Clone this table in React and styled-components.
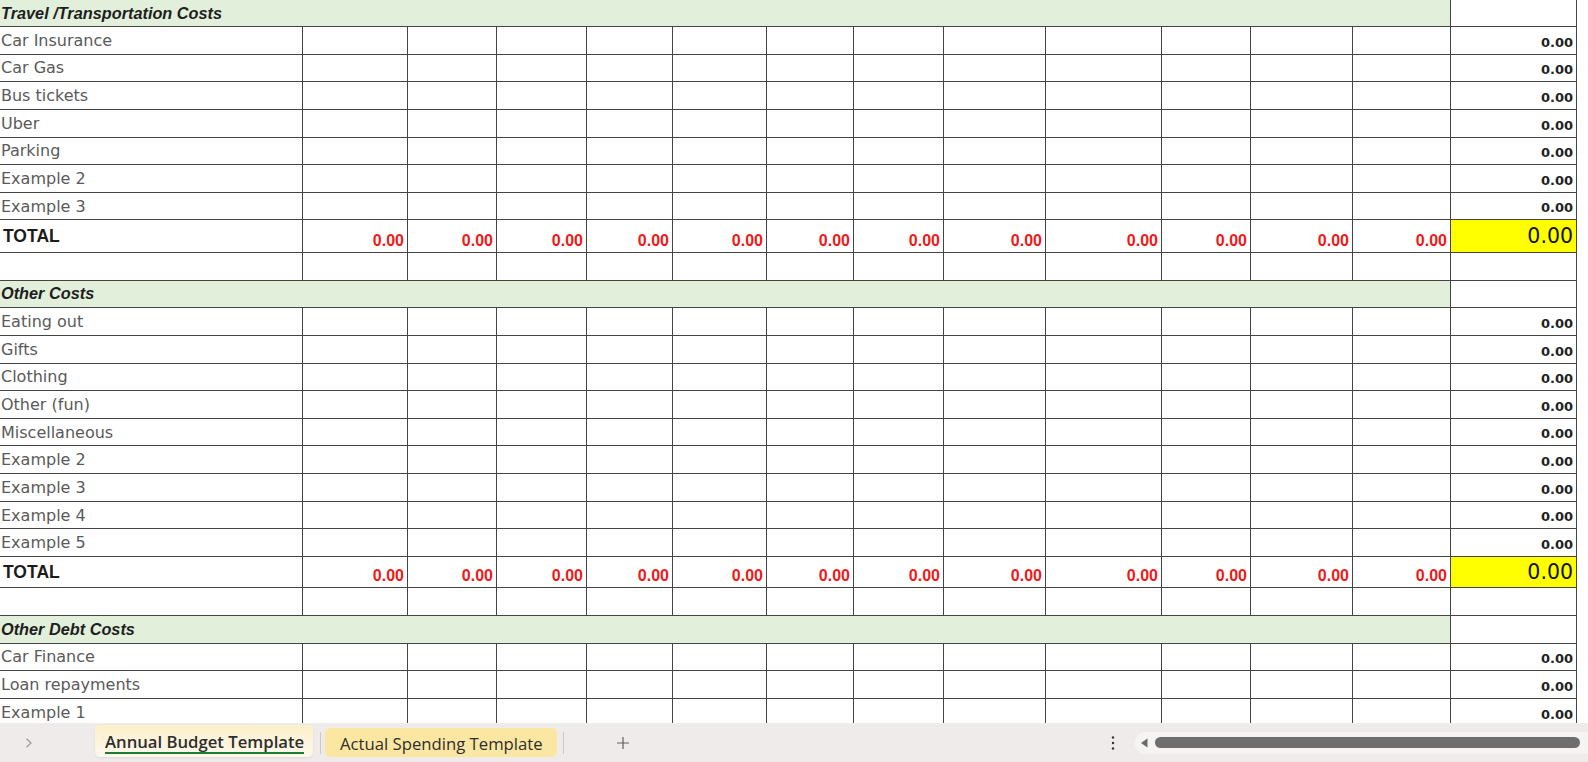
import React from 'react';
import styled, { createGlobalStyle } from 'styled-components';

const COLS = [303, 105, 89, 90, 86, 94, 87, 90, 102, 116, 89, 102, 98, 126];
const ROW_H = 27.65;
const LINE = '#444444';

const sections = [
    {
        title: 'Travel /Transportation Costs',
        headH: 27,
        items: ['Car Insurance', 'Car Gas', 'Bus tickets', 'Uber', 'Parking', 'Example 2', 'Example 3'],
        totalH: 32.5,
        withTotal: true
    },
    {
        title: 'Other Costs',
        headH: ROW_H,
        items: ['Eating out', 'Gifts', 'Clothing', 'Other (fun)', 'Miscellaneous', 'Example 2', 'Example 3', 'Example 4', 'Example 5'],
        totalH: 31.3,
        withTotal: true
    },
    {
        title: 'Other Debt Costs',
        headH: ROW_H,
        items: ['Car Finance', 'Loan repayments', 'Example 1'],
        withTotal: false
    }
];

const GlobalStyle = createGlobalStyle`
    html, body {
        margin: 0;
        padding: 0;
        background: #ffffff;
    }
    body {
        font-family: "DejaVu Sans", sans-serif;
    }
`;

const Page = styled.div`
    display: flex;
    flex-direction: column;
    width: 1588px;
    height: 762px;
    overflow: hidden;
`;

const Sheet = styled.div`
    flex: 1;
    overflow: hidden;
    min-height: 0;
`;

const Row = styled.div`
    display: grid;
    grid-template-columns: ${COLS.map(c => c + 'px').join(' ')};
    height: ${p => p.$h}px;
`;

const Cell = styled.div`
    box-sizing: border-box;
    border-right: 1px solid ${LINE};
    border-bottom: 1px solid ${LINE};
    display: flex;
    min-width: 0;
    overflow: hidden;
    white-space: nowrap;
`;

const HeadCell = styled(Cell)`
    grid-column: 1 / span 13;
    background: #e2efda;
    align-items: center;
    padding-left: 1px;
    font-family: "Liberation Sans", Arial, sans-serif;
    font-weight: 700;
    font-style: italic;
    font-size: 16.3px;
    color: #1e1e1e;
`;

const LabelCell = styled(Cell)`
    align-items: center;
    padding-left: 1px;
    font-size: 16px;
    color: #5a5a5a;
`;

const TotalLabel = styled(Cell)`
    align-items: center;
    padding-left: 3px;
    font-family: "Liberation Sans", Arial, sans-serif;
    font-weight: 700;
    font-size: 17.5px;
    color: #1c1c1c;
`;

const MonthCell = styled(Cell)`
    justify-content: flex-end;
    align-items: flex-end;
    padding: 0 3px 3px 0;
    line-height: 1;
    font-family: "Liberation Sans", Arial, sans-serif;
    font-weight: 700;
    font-size: 16px;
    color: #f01818;
`;

const SumCell = styled(Cell)`
    justify-content: flex-end;
    align-items: flex-end;
    padding: 0 3px 5px 0;
    line-height: 1;
    background: ${p => (p.$big ? '#ffff00' : '#ffffff')};
    font-weight: ${p => (p.$big ? 400 : 700)};
    font-size: ${p => (p.$big ? '20.5px' : '13px')};
    color: ${p => (p.$big ? '#111' : '#222')};
`;

const TabBar = styled.div`
    height: 39px;
    flex-shrink: 0;
    display: flex;
    align-items: center;
    background: #eeebea;
    font-family: "Open Sans", "Noto Sans", sans-serif;
    font-size: 16.7px;
`;

const NavButton = styled.div`
    width: 95px;
    height: 100%;
    display: flex;
    align-items: center;
    padding-left: 25px;
    box-sizing: border-box;
    color: #9a9a9a;
`;

const Tab = styled.div`
    box-sizing: border-box;
    width: ${p => p.$w}px;
    height: ${p => (p.$active ? 32 : 29)}px;
    margin-top: ${p => (p.$active ? -3 : 0)}px;
    margin-left: ${p => p.$ml}px;
    padding-left: ${p => (p.$active ? 10 : 15)}px;
    display: flex;
    align-items: center;
    border-radius: 5px;
    background: ${p => (p.$active ? 'linear-gradient(180deg, #fcefc8 0%, #fdf5df 60%, #fdf8ec 100%)' : '#fce7a2')};
    box-shadow: ${p => (p.$active ? '0 1px 2px rgba(0,0,0,0.08)' : 'none')};
    color: #2e2e2e;
    font-weight: ${p => (p.$active ? 600 : 400)};
    white-space: nowrap;
`;

const TabLabel = styled.span`
    display: inline-block;
    line-height: 20px;
    padding-top: 4px;
    border-bottom: 2px solid ${p => (p.$active ? '#1f7a36' : 'transparent')};
`;

const Separator = styled.div`
    width: 1px;
    height: 22px;
    margin-left: ${p => p.$ml}px;
    background: #cdc8c8;
`;

const AddButton = styled.div`
    width: 40px;
    margin-left: 39px;
    display: flex;
    justify-content: center;
    align-items: center;
    color: #606060;
`;

const Spacer = styled.div`
    flex: 1;
`;

const MoreButton = styled.div`
    width: 22px;
    display: flex;
    justify-content: center;
    align-items: center;
    margin-right: 11px;
    color: #333;
`;

const ScrollTrack = styled.div`
    width: 453px;
    height: 22px;
    display: flex;
    align-items: center;
    padding-left: 5px;
    box-sizing: border-box;
    background: #f6f4f3;
    border-radius: 11px 0 0 11px;
    color: #6a6a6a;
`;

const ScrollThumb = styled.div`
    width: 425px;
    height: 11px;
    margin-left: 7px;
    border-radius: 6px;
    background: #6e6e6e;
`;

const EmptyMonths = () => COLS.slice(1, 13).map((_, i) => <Cell key={i} />);

const Section = ({section}) => (
    <>
        <Row $h={section.headH}>
            <HeadCell>{section.title}</HeadCell>
            <Cell />
        </Row>
        {section.items.map((item, i) => (
            <Row $h={ROW_H} key={i}>
                <LabelCell>{item}</LabelCell>
                <EmptyMonths />
                <SumCell>0.00</SumCell>
            </Row>
        ))}
        {section.withTotal && (
            <>
                <Row $h={section.totalH}>
                    <TotalLabel>TOTAL</TotalLabel>
                    {COLS.slice(1, 13).map((_, i) => <MonthCell key={i}>0.00</MonthCell>)}
                    <SumCell $big>0.00</SumCell>
                </Row>
                <Row $h={ROW_H}>
                    <Cell />
                    <EmptyMonths />
                    <Cell />
                </Row>
            </>
        )}
    </>
);

const App = () => (
    <Page>
        <GlobalStyle />
        <Sheet>
            {sections.map((s, i) => <Section section={s} key={i} />)}
        </Sheet>
        <TabBar>
            <NavButton>
                <svg width="8" height="10" viewBox="0 0 8 10">
                    <polyline points="1.5,0.8 6,5 1.5,9.2" fill="none" stroke="currentColor" strokeWidth="1.2" />
                </svg>
            </NavButton>
            <Tab $active $w={218} $ml={0}>
                <TabLabel $active>Annual Budget Template</TabLabel>
            </Tab>
            <Separator $ml={7} />
            <Tab $w={232} $ml={4}>
                <TabLabel>Actual Spending Template</TabLabel>
            </Tab>
            <Separator $ml={6} />
            <AddButton>
                <svg width="14" height="14" viewBox="0 0 14 14">
                    <path d="M7 1 V13 M1 7 H13" stroke="currentColor" strokeWidth="1.2" fill="none" />
                </svg>
            </AddButton>
            <Spacer />
            <MoreButton>
                <svg width="4" height="14" viewBox="0 0 4 14">
                    <circle cx="2" cy="1.5" r="1.2" fill="currentColor" />
                    <circle cx="2" cy="7" r="1.2" fill="currentColor" />
                    <circle cx="2" cy="12.5" r="1.2" fill="currentColor" />
                </svg>
            </MoreButton>
            <ScrollTrack>
                <svg width="8" height="10" viewBox="0 0 8 10">
                    <polygon points="7.5,0.5 7.5,9.5 1,5" fill="currentColor" />
                </svg>
                <ScrollThumb />
            </ScrollTrack>
        </TabBar>
    </Page>
);

export default App;
